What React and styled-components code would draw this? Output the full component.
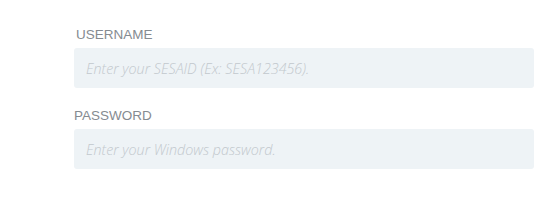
import React from 'react'
import styled, { createGlobalStyle } from 'styled-components'

const GlobalStyle = createGlobalStyle`
    body {
        margin: 0;
        background: #ffffff;
        font-family: "Liberation Sans", Arial, sans-serif;
    }
`
const Form = styled.form`
    display: flex;
    flex-direction: column;
    gap: 20px;
    padding: 27px 24px 0px 74px;
`
const Field = styled.div`
    display: flex;
    flex-direction: column;
    gap: 6px;
`
const Label = styled.label`
    display: block;
    font-size: 13.5px;
    line-height: 15px;
    color: #858b91;
    text-transform: uppercase;
    padding-left: ${props => props.indent || 0}px;
`
const Input = styled.input`
    box-sizing: border-box;
    width: 460px;
    height: 40px;
    border: none;
    border-radius: 3px;
    background-color: #eef3f6;
    padding: 0px 12px;
    font-family: "Open Sans", sans-serif;
    font-size: 14.3px;
    font-weight: 300;
    color: #333;
    outline: none;
    &::placeholder {
        color: #c2c8cd;
        font-style: italic;
    }
`

function App() {
    return (
        <>
            <GlobalStyle />
            <Form>
                <Field>
                    <Label htmlFor="username" indent={2}>Username</Label>
                    <Input id="username" type="text" placeholder="Enter your SESAID (Ex: SESA123456)." />
                </Field>
                <Field>
                    <Label htmlFor="password">Password</Label>
                    <Input id="password" type="password" placeholder="Enter your Windows password." />
                </Field>
            </Form>
        </>
    )
}

export default App
